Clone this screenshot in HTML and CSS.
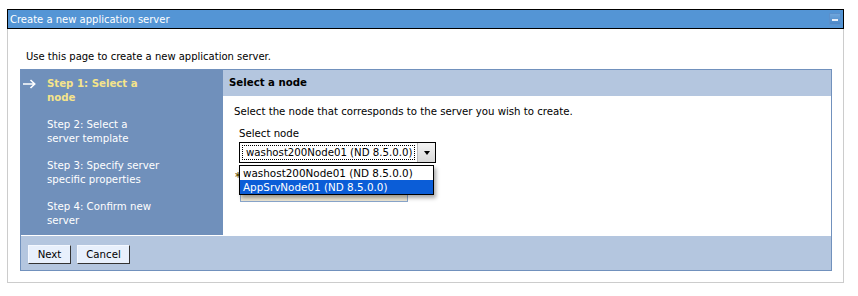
FILE: index.html
```html
<!DOCTYPE html>
<html>
<head>
<meta charset="utf-8">
<link rel="stylesheet" href="styles.css">
</head>
<body>
<div class="page">
  <div class="panel">
    <div class="titlebar">
      <span class="title">Create a new application server</span>
      <span class="minbtn"><span class="minbar"></span></span>
    </div>
    <div class="panel-body">
      <p class="intro">Use this page to create a new application server.</p>
      <div class="wizard">
        <div class="wiz-main">
          <div class="steps">
            <div class="step current"><span class="arrow"><svg width="13" height="10" viewBox="0 0 13 10"><path d="M0 5H11.5M7.5 1L11.7 5L7.5 9" fill="none" stroke="#fff" stroke-width="1.6"/></svg></span><span>Step 1: Select a<br>node</span></div>
            <div class="step"><span class="arrow"></span><span>Step 2: Select a<br>server template</span></div>
            <div class="step"><span class="arrow"></span><span>Step 3: Specify server<br>specific properties</span></div>
            <div class="step"><span class="arrow"></span><span>Step 4: Confirm new<br>server</span></div>
          </div>
          <div class="content">
            <div class="content-head">Select a node</div>
            <div class="content-body">
              <p class="desc">Select the node that corresponds to the server you wish to create.</p>
              <div class="field-label">Select node</div>
              <div class="select-wrap">
                <div class="select">
                  <span class="select-value">washost200Node01 (ND 8.5.0.0)</span>
                  <span class="select-btn"><span class="tri"></span></span>
                </div>
                <div class="behind">
                  <span class="req">*</span>
                  <span class="input"></span>
                </div>
                <ul class="dropdown">
                  <li>washost200Node01 (ND 8.5.0.0)</li>
                  <li class="sel">AppSrvNode01 (ND 8.5.0.0)</li>
                </ul>
              </div>
            </div>
          </div>
        </div>
        <div class="buttons">
          <button class="btn btn-next">Next</button>
          <button class="btn btn-cancel">Cancel</button>
        </div>
      </div>
    </div>
  </div>
</div>
</body>
</html>
```

FILE: styles.css
```css
* { box-sizing: border-box; }
body {
  margin: 0;
  background: #fff;
  font-family: "DejaVu Sans", Verdana, sans-serif;
  font-size: 10px;
  color: #000;
}
.page { padding: 9px 0 0 7px; }
.panel { width: 837px; }
.titlebar {
  height: 20px;
  border: 1px solid #000;
  background: #5495d5;
  color: #fff;
  display: flex;
  align-items: center;
  justify-content: space-between;
  padding: 0 2px 0 2px;
}
.title { font-size: 10px; }
.minbtn {
  width: 12px;
  height: 12px;
  background: linear-gradient(#6fa6dc, #4a86c6);
  border: 1px solid #5a90cc;
  display: flex;
  align-items: center;
  justify-content: center;
}
.minbar { width: 6px; height: 2px; background: #e8f0fa; margin-top: 2px; }
.panel-body {
  border: 1px solid #cccccc;
  border-top: none;
  height: 254px;
  padding: 0 11px 0 12px;
}
.intro { margin: 0; padding: 21px 0 0 6px; height: 40px; line-height: 14px; font-size: 10px; }
.wizard {
  width: 812px;
  border: 1px solid #7191bd;
}
.wiz-main { display: flex; height: 165px; }
.steps {
  width: 202px;
  background: #7090bb;
  padding-top: 7px;
}
.step {
  display: flex;
  color: #fff;
  line-height: 14px;
  height: 41px;
  font-size: 10.2px;
}
.step .arrow { width: 26px; padding: 2px 0 0 2px; }
.step .arrow svg { display: block; }
.step.current { color: #f5e48a; font-weight: bold; }
.content { flex: 1; background: #fff; }
.content-head {
  height: 26px;
  background: #b4c6df;
  font-weight: bold;
  padding: 6px 0 0 6px;
  line-height: 14px;
  font-size: 10.2px;
}
.content-body { padding: 9px 0 0 11px; }
.desc { margin: 0; line-height: 14px; font-size: 10.2px; }
.field-label { margin: 8px 0 0 5px; line-height: 14px; font-size: 10.2px; }
.select-wrap { position: relative; margin: 1px 0 0 5px; height: 60px; }
.select {
  width: 197px;
  height: 21px;
  border: 1px solid #000;
  display: flex;
  background: #fff;
}
.select-value {
  flex: 1;
  margin: 2px;
  border: 1px dotted #000;
  line-height: 13px;
  padding-left: 3px;
  font-size: 10.2px;
  white-space: nowrap;
  overflow: hidden;
}
.select-btn {
  width: 18px;
  background: linear-gradient(#f4f4f4, #d8d8d8);
  border-left: 1px solid #bbb;
  display: flex;
  align-items: center;
  justify-content: center;
}
.tri {
  width: 0; height: 0;
  border-left: 3px solid transparent;
  border-right: 3px solid transparent;
  border-top: 4px solid #000;
}
.behind { position: absolute; left: -4px; top: 29px; display: flex; }
.req { color: #6b5a10; font-weight: bold; width: 5px; font-size: 12px; line-height: 12px; }
.input {
  margin: 15px 0 0 0;
  width: 168px;
  height: 16px;
  background: #eee8d6;
  border: 1px solid #8aa6cc;
}
.dropdown {
  position: absolute;
  left: 0;
  top: 23px;
  width: 195px;
  margin: 0;
  padding: 0;
  list-style: none;
  border: 1px solid #000;
  background: #fff;
  box-shadow: 2px 3px 4px rgba(0,0,0,0.35);
}
.dropdown li { height: 14px; line-height: 14px; padding-left: 3px; white-space: nowrap; font-size: 10.4px; }
.dropdown li.sel { background: #0b5dd7; color: #fff; }
.buttons {
  height: 35px;
  background: #b4c6df;
  border-top: 1px solid #fff;
  display: flex;
  gap: 6px;
  padding: 9px 0 0 7px;
}
.btn {
  font-family: "DejaVu Sans", Verdana, sans-serif;
  font-size: 10.2px;
  height: 19px;
  padding: 0;
  background: #e8f0fc;
  border: 1px solid;
  border-color: #f4f8ff #333 #333 #f4f8ff;
  color: #000;
  line-height: 16px;
}
.btn-next { width: 43px; }
.btn-cancel { width: 53px; }
```
